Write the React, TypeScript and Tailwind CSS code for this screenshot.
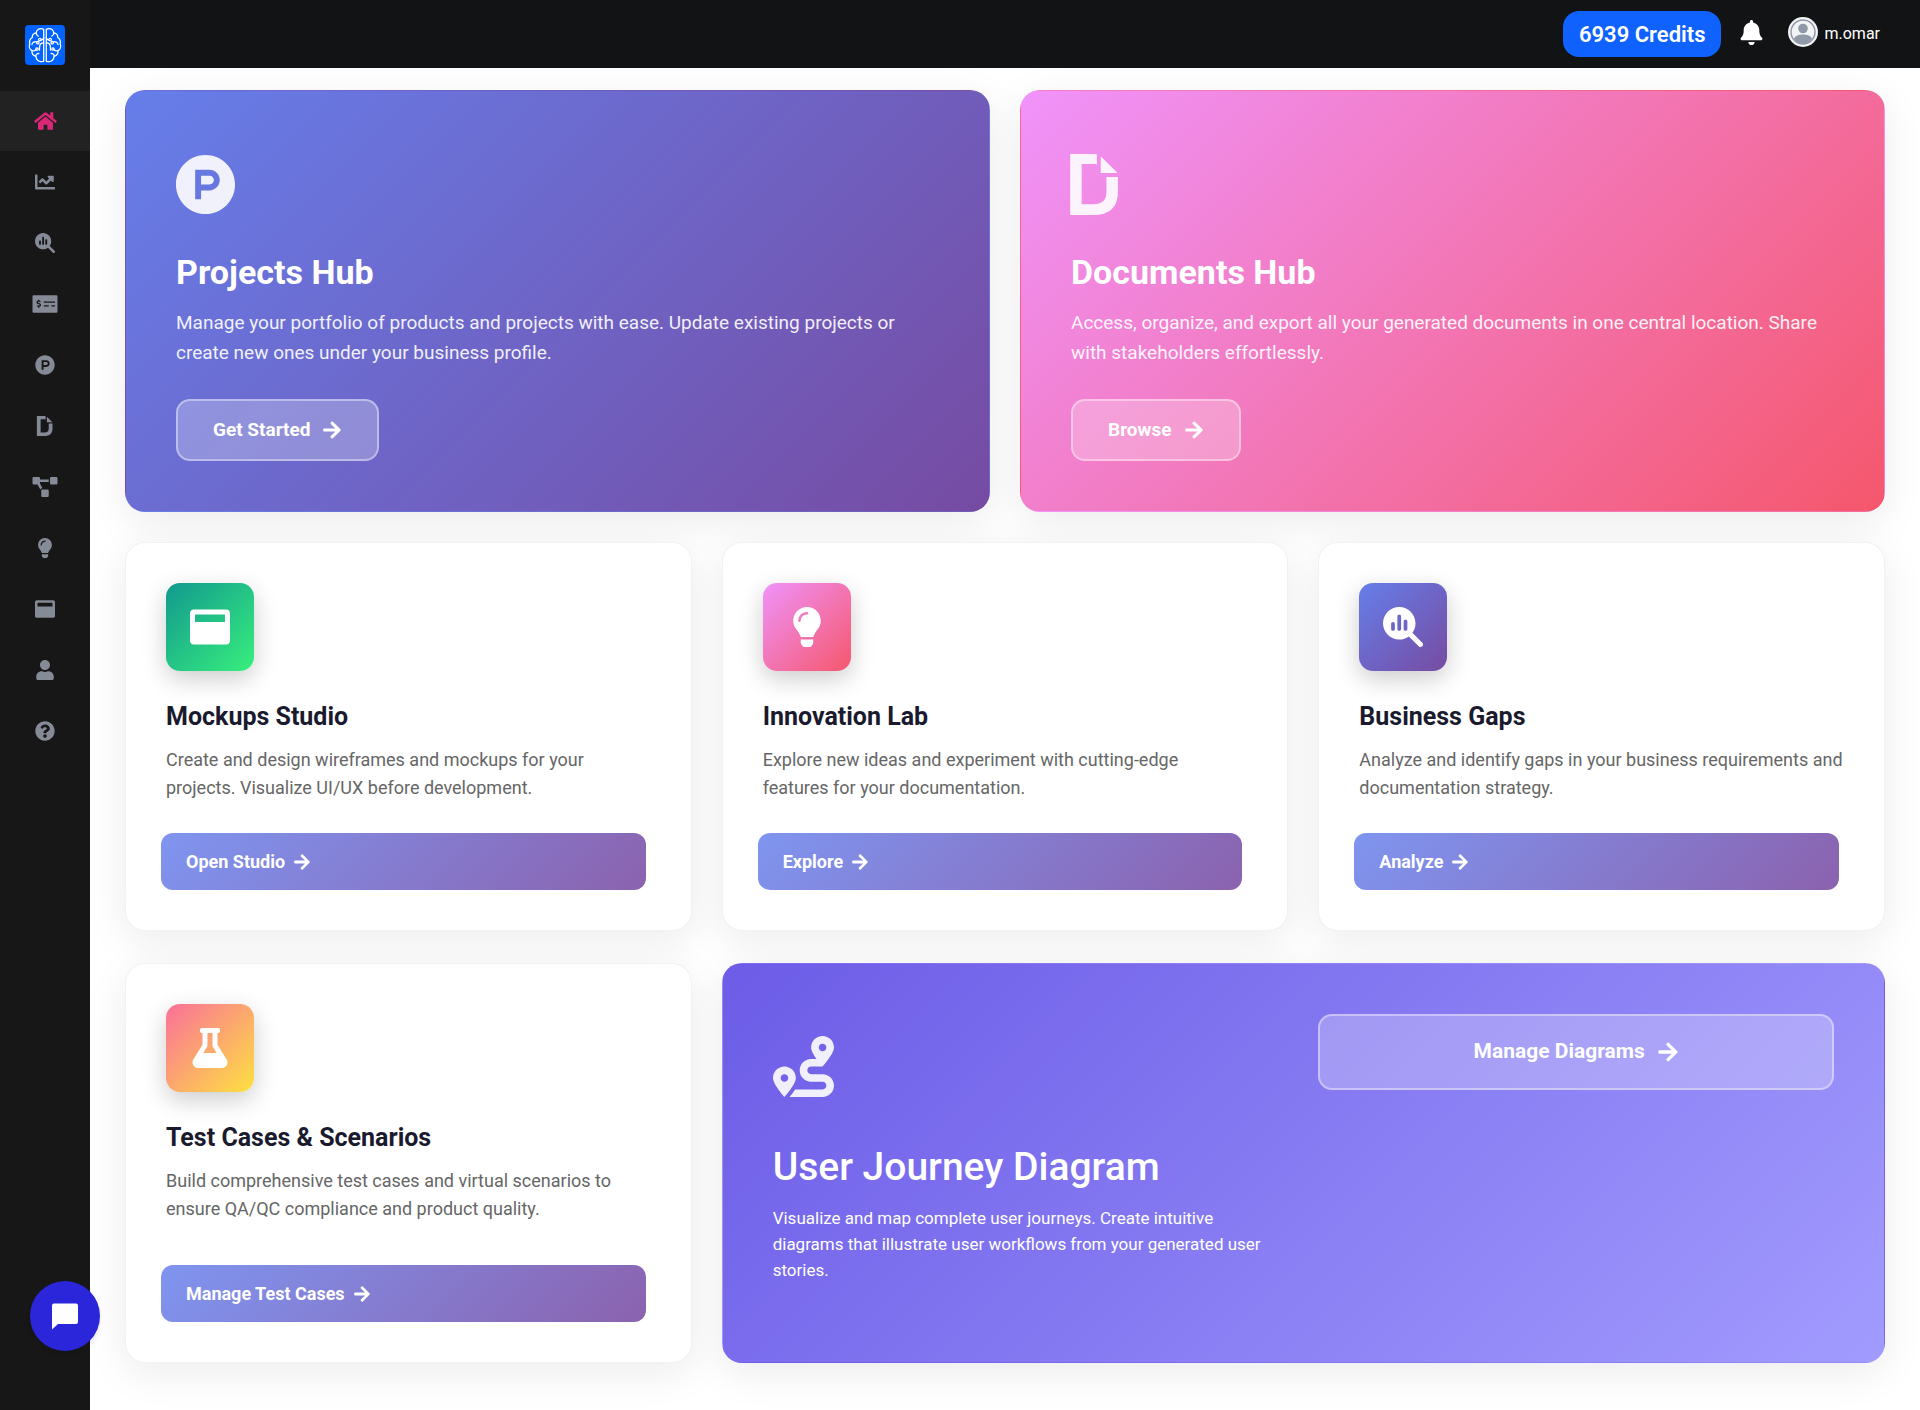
import { FaHome, FaChartLine, FaMoneyCheckAlt, FaProductHunt, FaDochub, FaProjectDiagram, FaLightbulb, FaWindowMaximize, FaUser, FaQuestionCircle, FaFlask, FaRoute, FaBell, FaArrowRight } from "react-icons/fa";
import { FaMagnifyingGlassChart } from "react-icons/fa6";
import type { IconType } from "react-icons";

const nav: { label: string; icon: IconType; width: string }[] = [
  { label: "Home", icon: FaHome, width: "w-[23px]" },
  { label: "Analytics", icon: FaChartLine, width: "w-5" },
  { label: "Business gaps", icon: FaMagnifyingGlassChart, width: "w-5" },
  { label: "Billing", icon: FaMoneyCheckAlt, width: "w-[26px]" },
  { label: "Projects", icon: FaProductHunt, width: "w-5" },
  { label: "Documents", icon: FaDochub, width: "w-5" },
  { label: "Diagrams", icon: FaProjectDiagram, width: "w-[26px]" },
  { label: "Innovation", icon: FaLightbulb, width: "w-5" },
  { label: "Mockups", icon: FaWindowMaximize, width: "w-5" },
  { label: "Profile", icon: FaUser, width: "w-5" },
  { label: "Help", icon: FaQuestionCircle, width: "w-5" },
];

function BrainHalf() {
  return (
    <g fill="none" stroke="white" strokeWidth="1.3" strokeLinecap="round" strokeLinejoin="round">
      <path d="M18.700 36.300V4.500C17.500 3.200 14.500 3.200 13 4.600C11.800 5.500 11.300 6.800 11.300 8C8.500 8 7 10.200 7.300 12.500C5.200 13.800 4.200 16.500 4.800 19C3.800 21.500 4.600 24.500 7 25.700C6.600 28.500 8.200 31 10.800 31.200C11.300 34.200 13 36.300 15.500 36.600C16.800 36.800 18 36.700 18.700 36.300" />
      <path d="M11.300 8C11.300 9.500 12 10.700 13.200 11.200M18.700 12.500C18.700 14 17.500 14.800 16.300 14.800" />
      <path d="M7 19.500C7.300 17.300 9.500 16.300 11.500 17" />
      <path d="M18.700 17.800C15.500 17.800 14.500 20 14.500 22.500V25" />
      <path d="M7 25.700C8.500 26.200 10 25.700 11 24.700M10.800 31.200C10.800 29.500 12 28.300 13.800 28.500" />
      <circle cx="14.900" cy="14.600" r="1.300" />
      <circle cx="12.800" cy="17.700" r="1.200" />
      <circle cx="12" cy="24" r="1.200" />
    </g>
  );
}

function Logo() {
  return (
    <svg viewBox="0 0 40 40" className="size-10" aria-label="Logo" role="img">
      <rect width="40" height="40" rx="4" fill="#0062ff" />
      <BrainHalf />
      <g transform="translate(40 0) scale(-1 1)"><BrainHalf /></g>
    </svg>
  );
}

type CardProps = { icon: IconType; title: string; text: string; action: string; gradient: string };

function HubCard({ icon: Icon, title, text, action, gradient, iconWidth }: CardProps & { iconWidth: string }) {
  return (
    <section className={`rounded-[20px] border border-transparent px-[50px] pt-[63px] pb-[50px] text-white shadow-[0_10px_40px_rgba(0,0,0,0.08)] ${gradient}`}>
      <Icon className={`-ml-px h-[61px] opacity-90 ${iconWidth}`} />
      <h2 className="mt-9 text-[34px] leading-[42px] font-bold">{title}</h2>
      <p className="mt-[15px] text-[19px] leading-[30px] opacity-90">{text}</p>
      <button className="mt-[31px] flex h-[62px] items-center gap-3 rounded-[14px] border-2 border-white/40 bg-white/25 px-[35px] text-[19px] font-bold">
        {action}
        <FaArrowRight className="size-5" />
      </button>
    </section>
  );
}

function ToolCard({ icon: Icon, title, text, action, gradient }: CardProps) {
  return (
    <section className="flex flex-col rounded-[20px] border border-black/5 bg-white p-10 shadow-[0_10px_40px_rgba(0,0,0,0.08)]">
      <div className={`flex size-[88px] items-center justify-center rounded-[14px] text-white shadow-[0_8px_24px_rgba(0,0,0,0.2)] ${gradient}`}>
        <Icon className="size-10" />
      </div>
      <h3 className="mt-[31px] text-[25px] leading-[30px] font-bold text-[#1a1a2e]">{title}</h3>
      <p className="mt-[14px] text-[18px] leading-7 text-[#666]">{text}</p>
      <div className="mt-auto">
        <button className="-ml-[5px] flex h-[57px] w-full items-center gap-2 rounded-xl bg-[linear-gradient(135deg,#7f95f0,#8b62ae)] px-[25px] text-[18px] font-bold text-white">
          {action}
          <FaArrowRight className="size-[18px]" />
        </button>
      </div>
    </section>
  );
}

export default function App() {
  return (
    <div className="flex min-h-screen bg-white font-['Roboto',sans-serif]">
      <aside className="w-[90px] shrink-0 bg-[#171717]">
        <a href="#home" className="flex h-[91px] items-start justify-center pt-[25px]"><Logo /></a>
        <nav>
          {nav.map(({ label, icon: Icon, width }, i) => (
            <a key={label} href="#" aria-label={label} className={`mb-px flex h-[60px] items-center justify-center ${i === 0 ? "bg-[#222] text-[#db2777]" : "text-[#858a97]"}`}>
              <Icon className={`h-5 ${width}`} />
            </a>
          ))}
        </nav>
      </aside>

      <div className="min-w-0 flex-1">
        <header className="flex h-[68px] items-center justify-end bg-[#111315] pr-10 text-white">
          <button className="h-[46px] rounded-2xl bg-[#0f62fe] px-4 text-[22px] font-semibold">6939 Credits</button>
          <button aria-label="Notifications" className="mb-1 ml-[18px]"><FaBell className="size-[25px]" /></button>
          <button className="ml-6 flex items-center gap-[6px] text-[16px]">
            <svg viewBox="0 0 30 30" className="mb-1 size-[30px]" aria-hidden="true">
              <circle cx="15" cy="15" r="15" fill="#f3f4f6" />
              <path d="M6 21.500C8 16 22 16 24 21.500C21 28.500 9 28.500 6 21.500Z" fill="#9099a8" />
              <circle cx="15" cy="15" r="12" fill="none" stroke="#9099a8" strokeWidth="1.500" />
              <circle cx="15" cy="11.500" r="4.800" fill="#9099a8" />
            </svg>
            m.omar
          </button>
        </header>

        <main className="px-[35px] pt-[22px] pb-12">
          <div className="grid grid-cols-2 gap-[30px]">
            <HubCard icon={FaProductHunt} iconWidth="w-[61px]" title="Projects Hub" text="Manage your portfolio of products and projects with ease. Update existing projects or create new ones under your business profile." action="Get Started" gradient="bg-[linear-gradient(135deg,#667eea,#764ba2)]" />
            <HubCard icon={FaDochub} iconWidth="w-[50px]" title="Documents Hub" text="Access, organize, and export all your generated documents in one central location. Share with stakeholders effortlessly." action="Browse" gradient="bg-[linear-gradient(135deg,#f093fb,#f5576c)]" />
          </div>
          <div className="mt-[30px] grid grid-cols-3 grid-rows-[389px_400px] gap-x-[30px] gap-y-8">
            <ToolCard icon={FaWindowMaximize} title="Mockups Studio" text="Create and design wireframes and mockups for your projects. Visualize UI/UX before development." action="Open Studio" gradient="bg-[linear-gradient(135deg,#11998e,#38ef7d)]" />
            <ToolCard icon={FaLightbulb} title="Innovation Lab" text="Explore new ideas and experiment with cutting-edge features for your documentation." action="Explore" gradient="bg-[linear-gradient(135deg,#f093fb,#f5576c)]" />
            <ToolCard icon={FaMagnifyingGlassChart} title="Business Gaps" text="Analyze and identify gaps in your business requirements and documentation strategy." action="Analyze" gradient="bg-[linear-gradient(135deg,#667eea,#764ba2)]" />
            <ToolCard icon={FaFlask} title="Test Cases & Scenarios" text="Build comprehensive test cases and virtual scenarios to ensure QA/QC compliance and product quality." action="Manage Test Cases" gradient="bg-[linear-gradient(135deg,#fa709a,#fee140)]" />
            <section className="col-span-2 grid grid-cols-2 items-start gap-[30px] rounded-[20px] border border-transparent bg-[linear-gradient(135deg,#6c5ce7,#a29bfe)] p-[50px] text-white shadow-[0_10px_40px_rgba(0,0,0,0.08)]">
              <div>
                <FaRoute className="mt-[22px] size-[61px] opacity-90" />
                <h2 className="mt-12 text-[39px] leading-[44px] font-medium">User Journey Diagram</h2>
                <p className="mt-4 pr-3 text-[17px] leading-[26px]">Visualize and map complete user journeys. Create intuitive diagrams that illustrate user workflows from your generated user stories.</p>
              </div>
              <button className="flex h-[76px] items-center justify-center gap-3 rounded-[14px] border-2 border-white/40 bg-white/25 text-[21px] font-bold">
                Manage Diagrams
                <FaArrowRight className="size-[22px]" />
              </button>
            </section>
          </div>
        </main>
      </div>

      <button aria-label="Open chat" className="fixed bottom-[59px] left-[30px] flex size-[70px] items-center justify-center rounded-full bg-[#2c26da] shadow-md">
        <svg viewBox="0 0 28 28" className="size-7" fill="white"><path d="M3 1.500H25Q27 1.500 27 3.500V20Q27 22 25 22H7L1 27.500V3.500Q1 1.500 3 1.500Z" /></svg>
      </button>
    </div>
  );
}
